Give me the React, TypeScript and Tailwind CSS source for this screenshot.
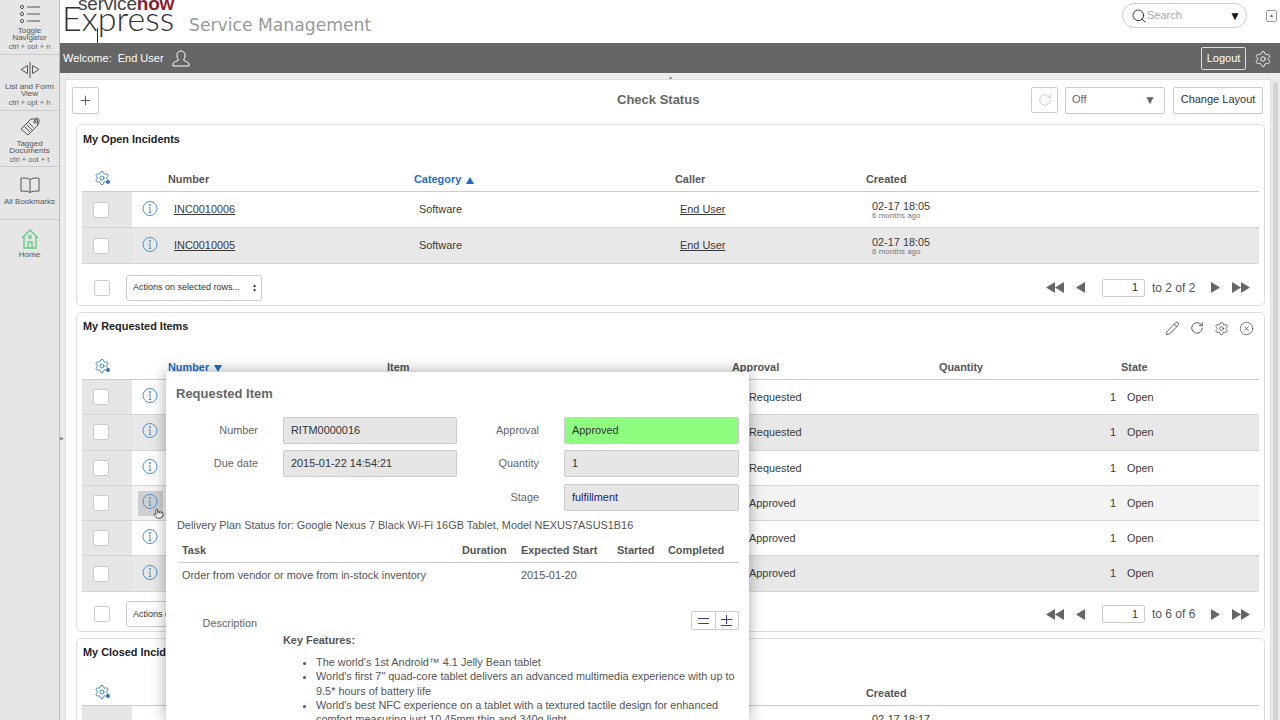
import { ReactNode } from "react"
import { Settings, RotateCw, Pencil, CircleX, Search, Plus, Pointer } from "lucide-react"

function Info() {
  return (
    <svg width="16" height="16" viewBox="0 0 16 16" fill="none" stroke="#4f8fcb" strokeWidth="1">
      <circle cx="8" cy="8" r="7" />
      <path d="M8 7v5M6.8 12h2.4M7 7h1" />
      <circle cx="8" cy="4.500" r="0.6" fill="#4f8fcb" />
    </svg>
  )
}

function BlueGear() {
  return (
    <div className="relative h-[16px] w-[16px]">
      <Settings size={16} strokeWidth={1.3} className="text-[#2f78bd]" />
      <span className="absolute bottom-[2px] right-0 h-[4px] w-[4px] rounded-full bg-[#2f78bd]" />
    </div>
  )
}

function SortMark({ up }: { up?: boolean }) {
  return (
    <svg width="8" height="7" viewBox="0 0 8 7" fill="#1f6fc4" className="ml-[5px] inline-block">
      <path d={up ? "M4 0l4 7H0z" : "M0 0h8L4 7z"} />
    </svg>
  )
}

function Tri({ dir, double }: { dir: "l" | "r"; double?: boolean }) {
  const p = dir === "l" ? "M9 0v11L0 5.500z" : "M0 0v11l9-5.500z"
  return (
    <svg width={double ? 18 : 10} height="11" viewBox={double ? "0 0 18 11" : "0 0 10 11"} fill="#666">
      <path d={p} />
      {double && <path d={p} transform="translate(9 0)" />}
    </svg>
  )
}

function Pager({ text }: { text: string }) {
  return (
    <div className="flex items-center text-[12px] text-[#555]">
      <Tri dir="l" double />
      <div className="ml-[12px]"><Tri dir="l" /></div>
      <div className="ml-[16px] flex h-[18px] w-[43px] items-center justify-end rounded-[2px] border border-[#ccc] pr-[6px] text-[11px] text-[#333]">1</div>
      <span className="ml-[7px] w-[59px]">{text}</span>
      <Tri dir="r" />
      <div className="ml-[11px]"><Tri dir="r" double /></div>
    </div>
  )
}

function Check({ className = "" }: { className?: string }) {
  return <div className={`h-[16px] w-[16px] rounded-[2px] border border-[#ccc] bg-white ${className}`} />
}

function Footer({ pager, height }: { pager: string; height: string }) {
  return (
    <div className={`flex ${height} items-center pl-[17px] pr-[14px]`}>
      <Check />
      <div className="ml-[16px] flex h-[26px] w-[136px] items-center justify-between rounded-[3px] border border-[#ccc] pl-[6px] pr-[4px] text-[9px] text-[#333]">
        Actions on selected rows...
        <span className="flex flex-col text-[5px] leading-[5px]"><span>▲</span><span>▼</span></span>
      </div>
      <div className="ml-auto"><Pager text={pager} /></div>
    </div>
  )
}

function Row({ cols, bg, children, hover, height = "h-[36px]" }: { cols: string; bg: string; children: ReactNode; hover?: boolean; height?: string }) {
  return (
    <div className={`grid ${cols} ${height} items-center border-b border-[#d4d4d4] text-[10.9px] text-[#3a3a3a] ${bg}`}>
      <div className="flex h-full items-center bg-[#e6e6e6] pl-[11px]"><Check /></div>
      <div className="flex h-full items-center justify-center">
        <div className={`relative flex h-[25px] w-[25px] items-center justify-center ${hover ? "bg-[#cfcfcf]" : ""}`}>
          <div className="-translate-y-[1.5px]"><Info /></div>
          {hover && (
            <Pointer size={11} strokeWidth={1.5} fill="#fff" className="absolute left-[15px] top-[17px] text-[#222]" />
          )}
        </div>
      </div>
      {children}
    </div>
  )
}

const incCols = "grid-cols-[50px_36px_246px_261px_191px_1fr]"
const reqCols = "grid-cols-[50px_36px_219px_345px_207px_182px_1fr]"

function IncRow({ num, bg }: { num: string; bg: string }) {
  return (
    <Row cols={incCols} bg={bg}>
      <span className="pl-[6px] underline">{num}</span>
      <span className="pl-[5px]">Software</span>
      <span className="pl-[5px] underline">End User</span>
      <div className="pl-[6px] pt-[2px] leading-[11px]">
        <div>02-17 18:05</div>
        <div className="text-[8px] leading-[8px] text-[#777]">6 months ago</div>
      </div>
    </Row>
  )
}

function ReqRow({ approval, bg, hover }: { approval: string; bg: string; hover?: boolean }) {
  return (
    <Row cols={reqCols} bg={bg} hover={hover} height="h-[35.3px]">
      <span />
      <span />
      <span className="pl-[17px]">{approval}</span>
      <span className="pr-[5px] text-right">1</span>
      <span className="pl-[6px]">Open</span>
    </Row>
  )
}

function Card({ title, actions, className, head, children }: { title: string; actions?: ReactNode; className: string; head: string; children: ReactNode }) {
  return (
    <section className={`mr-[5px] ml-[10px] rounded-[5px] border border-[#ddd] bg-white ${className}`}>
      <div className={`flex ${head} items-center justify-between pl-[6px] pr-[10px]`}>
        <h2 className="text-[10.9px] font-bold text-[#222]">{title}</h2>
        {actions}
      </div>
      {children}
    </section>
  )
}

function TableHead({ cols, children }: { cols: string; children: ReactNode }) {
  return (
    <div className={`grid ${cols} h-[26px] items-end border-b border-[#ccc] pb-[5px] text-[10.9px] font-bold leading-[13px] text-[#555]`}>
      <div className="pl-[12px]"><BlueGear /></div>
      <span />
      {children}
    </div>
  )
}

function SideItem({ icon, label, keys, className }: { icon: ReactNode; label: ReactNode; keys?: string; className: string }) {
  return (
    <div className={`flex flex-col items-center border-b border-[#ccc] ${className}`}>
      {icon}
      <div className="text-center text-[8px] leading-[7px] text-[#555]">{label}</div>
      {keys && <div className="mt-[2px] text-[7.5px] leading-[8px] text-[#666]">{keys}</div>}
    </div>
  )
}

function Field({ children, className = "bg-[#e6e6e6] text-[#333]" }: { children: ReactNode; className?: string }) {
  return (
    <div className={`flex h-[27px] items-center rounded-[2px] border border-[#ccc] px-[7px] ${className}`}>{children}</div>
  )
}

function Label({ children, className = "" }: { children: ReactNode; className?: string }) {
  return <div className={`text-right text-[#666] ${className}`}>{children}</div>
}

export default function App() {
  return (
    <div className="relative flex h-[720px] w-[1280px] overflow-hidden bg-white font-['Liberation_Sans',Arial,sans-serif]">
      {/* Left rail */}
      <aside className="w-[60px] shrink-0 border-r border-[#bbb] bg-[#e6e6e6]">
        <SideItem
          className="h-[55px] pt-[4px]"
          icon={
            <svg width="22" height="20" viewBox="0 0 22 20" fill="none" stroke="#555" strokeWidth="1" className="mb-[3px]">
              <circle cx="3" cy="3" r="1.6" /><circle cx="3" cy="10" r="1.6" /><circle cx="3" cy="17" r="1.6" />
              <path d="M8 3h13M8 10h13M8 17h13" />
            </svg>
          }
          label={<>Toggle<br />Navigator</>}
          keys="ctrl + oot + n"
        />
        <SideItem
          className="h-[56px] pt-[7px]"
          icon={
            <svg width="22" height="16" viewBox="0 0 22 16" fill="none" stroke="#555" strokeWidth="1" className="mb-[5px]">
              <path d="M11 0v16M8.500 3.500v8L2 7.500zM13.500 3.500v8l6.500-4z" />
            </svg>
          }
          label={<>List and Form<br />View</>}
          keys="ctrl + opt + h"
        />
        <SideItem
          className="h-[56px] pt-[6px]"
          icon={
            <svg width="20" height="20" viewBox="0 0 20 20" fill="none" stroke="#555" strokeWidth="1" className="mb-[3px]">
              <path d="M1 12 11 2l6 0 1 6L8 18zM4.500 9.500l6 6M6.500 7.500l6 6M8.500 5.500l5 5" />
              <circle cx="15" cy="5" r="1.200" />
              <path d="M15 4C14 1 18 0 19 3c.6 2-.5 4-2 5" />
            </svg>
          }
          label={<>Tagged<br />Documents</>}
          keys="ctrl + oot + t"
        />
        <SideItem
          className="h-[53px] pt-[10px]"
          icon={
            <svg width="20" height="17" viewBox="0 0 20 17" fill="none" stroke="#555" strokeWidth="1" className="mb-[4px]">
              <path d="M10 2.500C8 1 4 .8 1 1.200v13c3-.4 7-.2 9 1.300 2-1.500 6-1.700 9-1.300v-13C16 .8 12 1 10 2.500zM10 2.500v13" />
            </svg>
          }
          label="All Bookmarks"
        />
        <div className="flex flex-col items-center pt-[9px]">
          <svg width="18" height="20" viewBox="0 0 18 20" fill="none" stroke="#5fd07c" strokeWidth="1.3">
            <path d="M1 9 9 1l8 8M3 7.500V19h12V7.500M7 19v-6h4v6" />
            <circle cx="9" cy="8" r="1.300" />
          </svg>
          <span className="text-[8px] text-[#555]">Home</span>
        </div>
      </aside>

      <div className="flex min-w-0 flex-1 flex-col">
        {/* Logo and search */}
        <header className="flex h-[43px] shrink-0 items-start bg-white">
          <div className="relative ml-[2px] h-[43px] w-[115px]">
            <div className="absolute left-[16px] top-[-5px] whitespace-nowrap text-[19px] leading-[18px] tracking-[-0.2px] text-[#444]">
              service<span className="font-bold text-[#8a1f2d]">now</span>
            </div>
            <div className="absolute left-0 top-[1px] font-['Lato',sans-serif] text-[34px] font-light leading-[34px] text-[#333]">Express</div>
            <div className="absolute left-[35px] top-[28px] h-[15px] w-[1px] bg-[#333]" />
          </div>
          <div className="ml-[12px] mt-[14px] font-['DejaVu_Sans',sans-serif] text-[17.2px] leading-[22px] text-[#999]">Service Management</div>
          <div className="ml-auto mr-[33px] mt-[3px] flex h-[25px] w-[125px] items-center rounded-full border border-[#ccc] pl-[8px] pr-[5px]">
            <Search size={16} strokeWidth={1.4} className="text-[#222]" />
            <span className="text-[11px] text-[#aaa]">Search</span>
            <span className="ml-auto text-[12px] text-[#111]">▼</span>
          </div>
        </header>

        {/* Welcome bar */}
        <div className="flex h-[30px] shrink-0 items-center bg-[#666] pl-[3px] pr-[8px] pt-[1px] text-[11px] text-white">
          <span>Welcome:</span>
          <span className="ml-[6px]">End User</span>
          <svg width="18" height="17" viewBox="0 0 18 17" fill="none" stroke="#fff" strokeWidth="1" className="ml-[8px]">
            <path d="M1 16v-2c0-2 4-2.500 5.500-4C5 8 5 6 5 5c0-2.500 2-4 4-4s4 1.500 4 4c0 1 0 3-1.500 5 1.500 1.500 5.500 2 5.500 4v2z" />
          </svg>
          <div className="ml-auto flex h-[23px] w-[45px] items-center justify-center rounded-[2px] border border-[#ddd] text-[11px]">Logout</div>
          <Settings size={18} strokeWidth={1.2} className="ml-[8px]" />
        </div>

        {/* Content */}
        <main className="min-h-0 flex-1 bg-[#ececec] pl-[5px] pr-[9px] pt-[6px]">
          <div className="h-[700px] rounded-[3px] border border-[#ddd] bg-white">
            <div className="mb-[4px] flex h-[40px] items-center pl-[6px] pr-[7px]">
              <div className="flex h-[27px] w-[27px] items-center justify-center rounded-[2px] border border-[#ccc]">
                <Plus size={15} strokeWidth={1.2} className="text-[#333]" />
              </div>
              <div className="ml-[518px] text-[13px] font-bold text-[#666]">Check Status</div>
              <div className="ml-auto flex h-[26px] w-[27px] items-center justify-center rounded-[2px] border border-[#ccc]">
                <RotateCw size={14} strokeWidth={1.2} className="text-[#bbb]" />
              </div>
              <div className="ml-[7px] flex h-[27px] w-[100px] items-center justify-between rounded-[2px] border border-[#ccc] pb-[1px] pl-[6px] pr-[8px] text-[11px] text-[#666]">
                Off
                <span className="text-[12px]">▼</span>
              </div>
              <div className="ml-[8px] flex h-[27px] w-[90px] items-center justify-center rounded-[2px] border border-[#ccc] pb-[1px] text-[11px] text-[#333]">Change Layout</div>
            </div>

            <Card title="My Open Incidents" head="h-[28px]" className="h-[182px]">
              <div className="mx-[5px] mt-[13px]">
                <TableHead cols={incCols}>
                  <span>Number</span>
                  <span className="text-[#1f6fc4]">Category<SortMark up /></span>
                  <span>Caller</span>
                  <span>Created</span>
                </TableHead>
                <IncRow num="INC0010006" bg="bg-white" />
                <IncRow num="INC0010005" bg="bg-[#e8e8e8]" />
              </div>
              <Footer pager="to 2 of 2" height="h-[47px]" />
            </Card>

            <Card
              title="My Requested Items"
              head="h-[26px]"
              className="mt-[6px] h-[320px]"
              actions={
                <div className="flex translate-y-[2px] items-center gap-[10px] text-[#333]">
                  <Pencil size={15} strokeWidth={1.2} />
                  <RotateCw size={14} strokeWidth={1.3} />
                  <Settings size={15} strokeWidth={1.1} />
                  <CircleX size={15} strokeWidth={1} />
                </div>
              }
            >
              <div className="mx-[5px] mt-[15px]">
                <TableHead cols={reqCols}>
                  <span className="text-[#1f6fc4]">Number<SortMark /></span>
                  <span>Item</span>
                  <span>Approval</span>
                  <span>Quantity</span>
                  <span>State</span>
                </TableHead>
                <ReqRow approval="Requested" bg="bg-white" />
                <ReqRow approval="Requested" bg="bg-[#e8e8e8]" />
                <ReqRow approval="Requested" bg="bg-white" />
                <ReqRow approval="Approved" bg="bg-[#f3f3f3]" hover />
                <ReqRow approval="Approved" bg="bg-white" />
                <ReqRow approval="Approved" bg="bg-[#e8e8e8]" />
              </div>
              <Footer pager="to 6 of 6" height="h-[45px]" />
            </Card>

            <Card title="My Closed Incidents" head="h-[26px]" className="mt-[6px] h-[200px]">
              <div className="mx-[5px] mt-[15px]">
                <TableHead cols={incCols}>
                  <span>Number</span>
                  <span>Category</span>
                  <span>Caller</span>
                  <span>Created</span>
                </TableHead>
                <div className={`grid h-[40px] ${incCols} text-[10.9px] text-[#3a3a3a]`}>
                  <div className="bg-[#e6e6e6]" />
                  <span />
                  <span />
                  <span />
                  <span />
                  <div className="pl-[6px] pt-[8px] leading-[11px]">02-17 18:17</div>
                </div>
              </div>
            </Card>
          </div>
        </main>
      </div>

      {/* Requested Item popover */}
      <div className="absolute bottom-0 left-[166px] top-[372px] w-[583px] bg-white pl-[10px] pr-[10px] pt-[14px] text-[10.9px] text-[#555] shadow-[0_0_14px_rgba(0,0,0,0.35)]">
        <h3 className="text-[13px] font-bold leading-[15px] text-[#666]">Requested Item</h3>
        <div className="-ml-[10px] mt-[16px] grid grid-cols-[92px_174px_57px_175px] items-center gap-x-[25px] gap-y-[6px]">
          <Label>Number</Label>
          <Field>RITM0000016</Field>
          <Label>Approval</Label>
          <Field className="bg-[#8dfc7f] text-[#333]">Approved</Field>
          <Label>Due date</Label>
          <Field>2015-01-22 14:54:21</Field>
          <Label>Quantity</Label>
          <Field>1</Field>
          <span />
          <span />
          <Label className="mt-[1px]">Stage</Label>
          <Field className="mt-[1px] bg-[#e6e6e6] text-[#1a1a8a]">fulfillment</Field>
        </div>
        <p className="ml-[1px] mt-[8px] leading-[13px]">Delivery Plan Status for: Google Nexus 7 Black Wi-Fi 16GB Tablet, Model NEXUS7ASUS1B16</p>
        <div className="ml-[2px] mt-[12px] grid grid-cols-[284px_55px_96px_51px_1fr] border-b border-[#ccc] pb-[5px] pl-[4px] font-bold leading-[13px]">
          <span>Task</span>
          <span className="-ml-[4px]">Duration</span>
          <span>Expected Start</span>
          <span>Started</span>
          <span>Completed</span>
        </div>
        <div className="ml-[2px] mt-[6px] grid grid-cols-[339px_1fr] pl-[4px] leading-[13px]">
          <span>Order from vendor or move from in-stock inventory</span>
          <span>2015-01-20</span>
        </div>
        <div className="relative mt-[29px] flex">
          <div className="w-[81px] shrink-0 pt-[4px] text-right text-[#666]">Description</div>
          <div className="ml-[26px] flex-1 pt-[23px]">
            <div className="font-bold leading-[13px]">Key Features:</div>
            <ul className="ml-[33px] mt-[8px] w-[420px] list-disc leading-[14.25px]">
              <li>The world's 1st Android™ 4.1 Jelly Bean tablet</li>
              <li>World's first 7" quad-core tablet delivers an advanced multimedia experience with up to 9.5* hours of battery life</li>
              <li>World's best NFC experience on a tablet with a textured tactile design for enhanced comfort measuring just 10.45mm thin and 340g light</li>
            </ul>
          </div>
          <div className="absolute right-0 top-0 flex h-[19px] w-[48px] items-center rounded-[2px] border border-[#ccc]">
            <div className="flex h-full flex-1 items-center justify-center border-r border-[#ccc]">
              <svg width="11" height="8" viewBox="0 0 11 8" stroke="#3b3bb0" strokeWidth="1"><path d="M0 1.500h11M0 6.500h11" /></svg>
            </div>
            <div className="flex h-full flex-1 items-center justify-center">
              <svg width="11" height="11" viewBox="0 0 11 11" stroke="#3b3bb0" strokeWidth="1"><path d="M0 4.500h11M5.500 0v9M0 10.500h11" /></svg>
            </div>
          </div>
        </div>
      </div>

      {/* Splitter ticks, window control, scrollbar */}
      <div className="absolute left-[668px] top-[75px] text-[5px] leading-[5px] text-[#888]">▲</div>
      <div className="absolute left-[60px] top-[436px] text-[5px] leading-[5px] text-[#888]">▶</div>
      <div className="absolute right-[3px] top-[10px] flex h-[12px] w-[11px] items-center justify-center rounded-[2px] border border-[#999] text-[5px] text-[#666]">▲</div>
      <div className="absolute right-[2px] top-[82px] h-[640px] w-[5px] rounded-full bg-[#d4d4d4]" />
    </div>
  )
}
